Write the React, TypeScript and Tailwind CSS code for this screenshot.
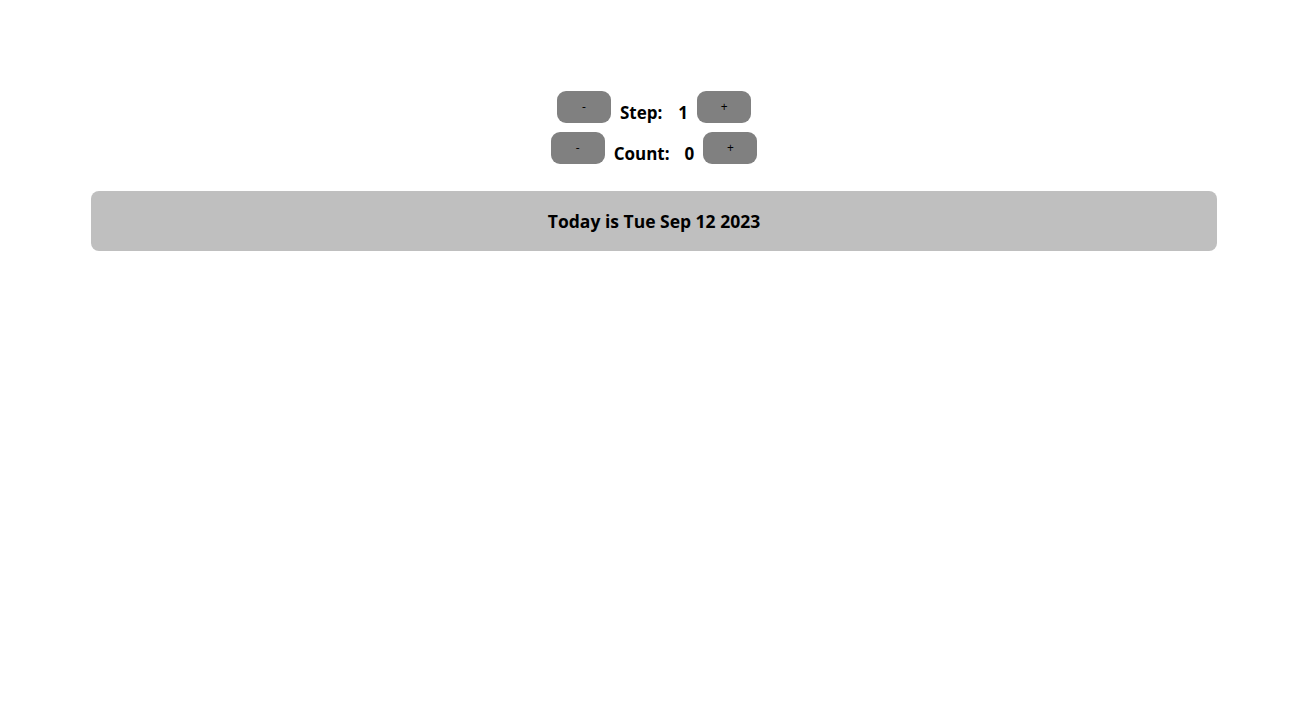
import React from "react";

function Btn({ label }: { label: string }) {
  return (
    <button className="w-[54px] h-[32px] rounded-[9px] bg-[#808080] text-[12px] leading-none text-black flex items-center justify-center">
      {label}
    </button>
  );
}

export default function App() {
  return (
    <div className="min-h-[720px] bg-white pt-[91px] font-['Open_Sans',sans-serif]">
      <div className="flex flex-col items-center gap-[9px]">
        <div className="flex items-start h-[32px]">
          <Btn label="-" />
          <span className="mt-[11px] ml-[9px] text-[17px] font-bold leading-[22px]">Step:</span>
          <span className="mt-[11px] ml-[16px] mr-[9px] text-[17px] font-bold leading-[22px]">1</span>
          <Btn label="+" />
        </div>
        <div className="flex items-start h-[32px]">
          <Btn label="-" />
          <span className="mt-[11px] ml-[9px] text-[17px] font-bold leading-[22px]">Count:</span>
          <span className="mt-[11px] ml-[15px] mr-[9px] text-[17px] font-bold leading-[22px]">0</span>
          <Btn label="+" />
        </div>
      </div>
      <div className="mx-[91px] mt-[27px] h-[60px] rounded-[8px] bg-[#bfbfbf] flex items-center justify-center">
        <span className="text-[17.5px] font-bold leading-normal text-black">Today is Tue Sep 12 2023</span>
      </div>
    </div>
  );
}
